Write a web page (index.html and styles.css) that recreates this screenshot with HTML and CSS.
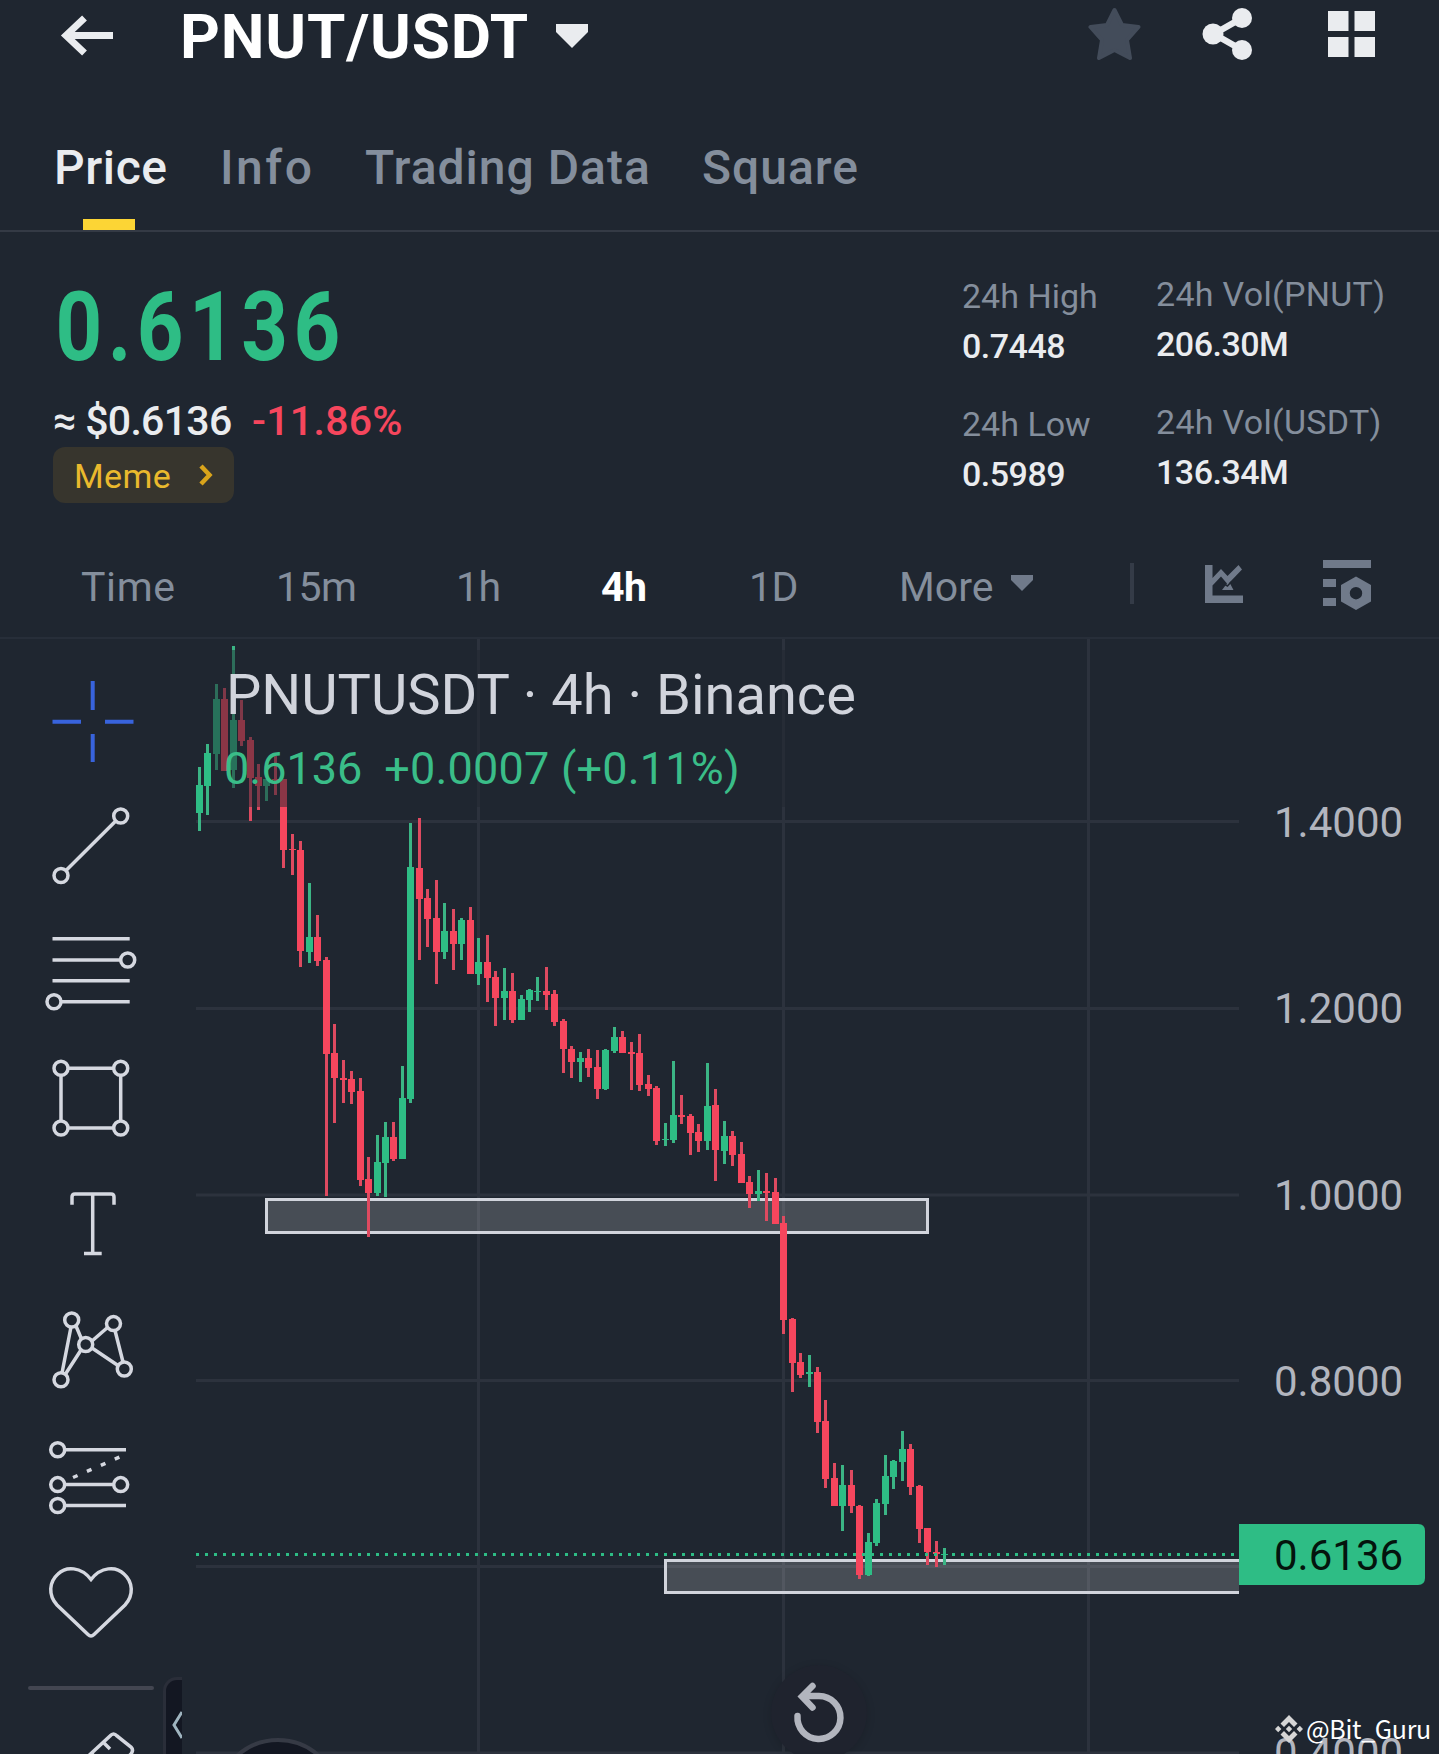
FILE: index.html
```
<!DOCTYPE html>
<html lang="en">
<head>
  <meta charset="utf-8">
  <meta name="viewport" content="width=device-width">
  <title>PNUT/USDT</title>
  <link rel="stylesheet" href="styles.css">
</head>
<body>
<div class="app">

  <header class="header">
    <svg class="back" width="54" height="42" viewBox="0 0 54 42">
      <path d="M53 20.5H6M24.500 3L6 20.500L24.500 38" fill="none" stroke="#eaecef" stroke-width="7"/>
    </svg>
    <h1 class="pair">PNUT/USDT</h1>
    <svg class="caret" width="32" height="24" viewBox="0 0 32 24"><path d="M0 0H32V8L16 24L0 8Z" fill="#eaecef"/></svg>
    <div class="actions">
      <svg width="53" height="54" viewBox="0 0 53 54">
        <path d="M26.500 3L34 18L50.500 20L39 33L42 51L26.500 43L11 51L14 33L2.500 20L19 18Z" fill="#434c5a" stroke="#434c5a" stroke-width="4" stroke-linejoin="round"/>
      </svg>
      <svg width="52" height="54" viewBox="0 0 52 54">
        <path d="M40 11L12 27L40 43" fill="none" stroke="#eaecef" stroke-width="6.500"/>
        <circle cx="40" cy="11" r="10" fill="#eaecef"/>
        <circle cx="11" cy="27" r="10.500" fill="#eaecef"/>
        <circle cx="40" cy="43" r="10" fill="#eaecef"/>
      </svg>
      <svg width="48" height="48" viewBox="0 0 48 48">
        <path d="M0 1H20.500V21H0ZM26.500 1H47V21H26.500ZM0 27H20.500V47H0ZM26.500 27H47V47H26.500Z" fill="#eaecef"/>
      </svg>
    </div>
  </header>

  <nav class="tabs">
    <a class="tab active">Price</a>
    <a class="tab info">Info</a>
    <a class="tab">Trading Data</a>
    <a class="tab">Square</a>
  </nav>

  <section class="ticker">
    <div class="quote">
      <div class="last">0.6136</div>
      <div class="sub"><span class="usd">≈ $0.6136</span><span class="change">-11.86%</span></div>
      <div class="tag"><span>Meme</span>
        <svg width="14" height="22" viewBox="0 0 14 22"><path d="M2 2L10.500 11L2 20" fill="none" stroke="#d9a41b" stroke-width="4.500"/></svg>
      </div>
    </div>
    <div class="stats">
      <div class="stat-col">
        <div class="stat"><span class="label">24h High</span><span class="value">0.7448</span></div>
        <div class="stat"><span class="label">24h Low</span><span class="value">0.5989</span></div>
      </div>
      <div class="stat-col vol">
        <div class="stat"><span class="label">24h Vol(PNUT)</span><span class="value">206.30M</span></div>
        <div class="stat"><span class="label">24h Vol(USDT)</span><span class="value">136.34M</span></div>
      </div>
    </div>
  </section>

  <nav class="intervals">
    <span class="time">Time</span>
    <span>15m</span>
    <span>1h</span>
    <span class="on">4h</span>
    <span>1D</span>
    <span class="more">More <svg width="22" height="16" viewBox="0 0 22 16"><path d="M0 0H22V5L11 16L0 5Z" fill="#707a8a"/></svg></span>
    <i class="divider"></i>
    <svg class="ic-chart" width="39" height="40" viewBox="0 0 39 40">
      <path d="M0 1H7.500V14L16 5L22.500 12L33.500 1L37 5.500L24.500 18.500L28.500 26H17L22 19.500L16 12.500L7.500 21.500V31.500H38V39H0Z" fill="#707a8a"/>
      <path d="M17.500 19L22.500 22L26 18" fill="none" stroke="#1f2630" stroke-width="1.500"/>
    </svg>
    <svg class="ic-settings" width="48" height="50" viewBox="0 0 48 50">
      <path d="M0 0H48V8H0ZM0 19H13V27H0ZM0 38H13V46H0Z" fill="#707a8a"/>
      <path fill-rule="evenodd" d="M33 16.500L48 25V41.500L33 50L18 41.500V25ZM33 27A6.200 6.200 0 1 0 33 39.400A6.200 6.200 0 1 0 33 27Z" fill="#707a8a"/>
    </svg>
  </nav>

  <main class="chart">
    <aside class="tools">
      <svg class="cross" viewBox="0 0 182 126"><path d="M52.500 62.700H81M105 62.700H133.500M92.700 22V51M92.700 75V103"/></svg>
      <svg viewBox="0 0 182 126">
        <path d="M66 85.500L115.700 36"/>
        <circle cx="120.700" cy="31" r="7"/><circle cx="61" cy="90.500" r="7"/>
      </svg>
      <svg viewBox="0 0 182 126">
        <path d="M52.500 27.700H129.700M52.500 49H120.700M52.500 69.700H129.700M61 90.700H129.700"/>
        <circle cx="127.700" cy="49" r="7"/><circle cx="54" cy="90.700" r="7"/>
      </svg>
      <svg viewBox="0 0 182 126">
        <path d="M68 31.300H113.700M68 91H113.700M61 38.300V84M120.700 38.300V84"/>
        <circle cx="61" cy="31.300" r="7"/><circle cx="120.700" cy="31.300" r="7"/>
        <circle cx="61" cy="91" r="7"/><circle cx="120.700" cy="91" r="7"/>
      </svg>
      <svg viewBox="0 0 182 126"><path d="M72 41.700V34Q72 31 75 31H111Q114 31 114 34V41.700M92.700 31V90.600M84 90.600H101.700"/></svg>
      <svg viewBox="0 0 182 126">
        <path d="M71 38L62 84M76 37L81.500 50M81 61L65.500 85M92 52L107.500 38.500M92 59L118 76.500M115 41.500L123 73"/>
        <circle cx="71.700" cy="31" r="7"/><circle cx="113.500" cy="34.600" r="7"/><circle cx="85.700" cy="55.500" r="7"/>
        <circle cx="61" cy="90.700" r="7"/><circle cx="124.300" cy="80" r="7"/>
      </svg>
      <svg viewBox="0 0 182 126">
        <path d="M64.700 34.800H126M64.700 69.600H113.700M64.700 90.500H126"/>
        <path d="M73 62.500L121 41.500" stroke-dasharray="5 10.200"/>
        <circle cx="57.700" cy="34.800" r="7"/><circle cx="57.700" cy="69.600" r="7"/>
        <circle cx="120.700" cy="69.600" r="7"/><circle cx="57.700" cy="90.500" r="7"/>
      </svg>
      <svg viewBox="0 0 182 126"><path d="M91 38.500C81 25.500 66 25 58 33C49 41 48 54 57 64L88 93.500Q91 96.500 94 93.500L125 64C134 54 133 41 124 33C116 25 101 25.500 91 38.500Z"/></svg>
      <hr class="sep">
      <svg class="ruler" viewBox="0 0 182 64"><path d="M70 65L110 28Q113.500 24 117 28L131 39Q134 42 131 46L110 66M103 34L110 41M91 45L100 54"/></svg>
    </aside>
    <div class="collapse">
      <svg width="12" height="30" viewBox="0 0 12 30"><path d="M11 2L3 15L11 28" fill="none" stroke="#9fb4bf" stroke-width="3"/></svg>
    </div>

    <div class="plot">
      <svg class="canvas" width="1257" height="1115" viewBox="182 639 1257 1115">
        <g stroke="#2c323d" stroke-width="3">
          <path d="M478.500 637V1754M783.500 637V1754M1088.500 637V1754"/>
          <path d="M196 821.500H1239M196 1008.500H1239M196 1195H1239M196 1380.500H1239M196 1566.500H1239M196 1753H1239"/>
        </g>
        <g fill="#fff" fill-opacity=".18" stroke="#d1d4dc" stroke-width="3">
          <rect x="266.500" y="1199.500" width="661" height="33"/>
          <path d="M1239 1560.500H665.500V1592.500H1239"/>
        </g>
        <g id="candles"></g>
        <path d="M196 1554.500H1239" stroke="#2ebd85" stroke-width="3" stroke-dasharray="3 6"/>
        <rect x="212" y="650" width="650" height="157" fill="#1f2630" fill-opacity=".5"/>
        <g class="axis">
          <text x="1274" y="836.500">1.4000</text>
          <text x="1274" y="1023">1.2000</text>
          <text x="1274" y="1209.500">1.0000</text>
          <text x="1274" y="1396">0.8000</text>
          <text x="1274" y="1768">0.4000</text>
        </g>
        <path d="M1239 1524H1418Q1425 1524 1425 1531V1578Q1425 1585 1418 1585H1239Z" fill="#2ebd85"/>
        <text class="now" x="1274" y="1570">0.6136</text>
        <circle cx="278" cy="1801" r="61" fill="#131722" stroke="#363a45" stroke-width="4"/>
      </svg>

      <div class="legend">
        <div class="symbol">PNUTUSDT · 4h · Binance</div>
        <div class="ohlc"><span>0.6136</span><span class="delta">+0.0007 (+0.11%)</span></div>
      </div>

      <div class="reset">
        <svg width="56" height="64" viewBox="0 0 56 64">
          <path d="M6.500 36A21.500 21.500 0 1 0 28 16H14M21.500 6L11 16.500L21.500 27.500" fill="none" stroke="#b2b5be" stroke-width="6.500" stroke-linecap="round"/>
        </svg>
      </div>

      <div class="watermark">
        <svg width="28" height="28" viewBox="0 0 28 28" fill="#d6d6d6">
          <path d="M14 0L22.500 8.500L19 12L14 7L9 12L5.500 8.500ZM14 28L22.500 19.500L19 16L14 21L9 16L5.500 19.500ZM3.200 10.800L6.400 14L3.200 17.200L0 14ZM24.800 10.800L28 14L24.800 17.200L21.600 14ZM14 10.800L17.200 14L14 17.200L10.800 14Z"/>
        </svg>
        <span>@Bit_Guru</span>
      </div>
    </div>
  </main>
</div>
<script src="chart.js"></script>
</body>
</html>
```

FILE: styles.css
```
* {
  box-sizing: border-box;
}

body {
  margin: 0;
  background: #1f2630;
  color: #eaecef;
  font-family: Roboto, "Liberation Sans", sans-serif;
}

svg {
  display: block;
  flex: none;
}

.app {
  width: 1439px;
  height: 1754px;
  overflow: hidden;
}

/* header */
.header {
  display: flex;
  align-items: center;
  height: 74px;
  padding: 0 63px 0 60px;
}

.back {
  margin-top: -3px;
}

.pair {
  margin: 0 0 0 66px;
  width: 376px;
  font-size: 62px;
  line-height: 74px;
  font-weight: 700;
  letter-spacing: .8px;
  color: #fff;
  white-space: nowrap;
}

.caret {
  margin-top: -3px;
}

.actions {
  display: flex;
  align-items: center;
  margin: -6px 0 0 auto;
}

.actions svg + svg {
  margin-left: 61px;
}

.actions svg:last-child {
  margin-left: 74px;
}

/* tabs */
.tabs {
  display: grid;
  grid-template-columns: 166px 145px 337px auto;
  height: 158px;
  padding: 64px 0 0 54px;
  border-bottom: 2px solid #343a45;
}

.tab {
  position: relative;
  font-size: 48px;
  line-height: 60px;
  font-weight: 500;
  letter-spacing: 1px;
  color: #848e9c;
  white-space: nowrap;
}

.tab.info {
  letter-spacing: 2.5px;
}

.tab.active {
  color: #eaecef;
  letter-spacing: .6px;
}

.tab.active::after {
  content: "";
  position: absolute;
  left: 29px;
  bottom: 0;
  width: 52px;
  height: 11px;
  background: #fcd535;
}

/* last price and 24h stats */
.ticker {
  display: flex;
  justify-content: space-between;
  height: 305px;
  padding: 35px 0 0 53px;
}

.last {
  height: 120px;
  padding-left: 3px;
  font-size: 97px;
  line-height: 120px;
  font-weight: 700;
  color: #2ebd85;
  letter-spacing: 6.5px;
  transform: scaleX(.84);
  transform-origin: left;
}

.sub {
  display: flex;
  height: 60px;
  margin-top: 4px;
  font-size: 41px;
  line-height: 60px;
  font-weight: 500;
  white-space: nowrap;
}

.usd {
  width: 199px;
  letter-spacing: -.7px;
}

.change {
  color: #f6465d;
  letter-spacing: .3px;
}

.tag {
  display: flex;
  align-items: center;
  justify-content: space-between;
  width: 181px;
  height: 56px;
  margin-top: -4px;
  padding: 0 21px 0 21px;
  border-radius: 12px;
  background: #37352d;
  color: #eab92d;
  font-size: 34px;
  letter-spacing: .4px;
}

.tag span {
  padding-top: 2px;
}

.stats {
  display: flex;
  font-size: 34px;
}

.stat-col {
  width: 194px;
  padding-top: 4px;
}

.stat-col.vol {
  width: 283px;
  padding-top: 2px;
}

.stat {
  height: 128px;
  white-space: nowrap;
}

.stat span {
  display: block;
  line-height: 50px;
}

.label {
  color: #848e9c;
}

.vol .label {
  letter-spacing: .3px;
}

.stat .value {
  font-weight: 500;
  letter-spacing: -.5px;
}

/* intervals */
.intervals {
  display: grid;
  grid-template-columns: 195px 180px 145px 148px 150px 231px 75px 118px 48px;
  align-items: start;
  height: 100px;
  padding: 23px 0 0 81px;
  font-size: 41px;
  line-height: 54px;
  letter-spacing: -.5px;
  color: #848e9c;
}

.intervals .time {
  letter-spacing: .6px;
}

.intervals .on {
  color: #fff;
  font-weight: 700;
}

.more {
  display: flex;
  align-items: center;
  height: 54px;
  letter-spacing: 0;
}

.more svg {
  margin: -8px 0 0 18px;
}

.divider {
  width: 4px;
  height: 41px;
  margin-top: 3px;
  background: #343b47;
}

.ic-chart {
  margin-top: 4px;
}

/* chart */
.chart {
  position: relative;
  display: flex;
  height: 1117px;
  border-top: 2px solid #272e39;
}

.tools {
  width: 182px;
  padding-top: 20px;
}

.tools svg {
  width: 182px;
  height: 126px;
  fill: none;
  stroke: #d5d8e0;
  stroke-width: 3.5;
}

.tools .cross {
  stroke: #3863dc;
  stroke-width: 4;
}

.tools .ruler {
  height: 64px;
}

.sep {
  width: 126px;
  height: 4px;
  margin: 19px 28px 18px;
  border: 0;
  border-radius: 2px;
  background: #434651;
}

.collapse {
  position: absolute;
  left: 163px;
  top: 1038px;
  width: 19px;
  height: 90px;
  padding: 30px 0 0 5px;
  border: 3px solid #2a2e39;
  border-right: 0;
  border-radius: 14px 0 0 0;
  background: #131722;
  overflow: hidden;
}

.plot {
  position: relative;
  width: 1257px;
}

.axis text,
.now {
  font-size: 42px;
  fill: #b2b5be;
}

.now {
  fill: #04140d;
}

.legend {
  position: absolute;
  left: 44px;
  top: 20px;
  white-space: nowrap;
}

.symbol {
  height: 72px;
  font-size: 56px;
  line-height: 72px;
  color: #d1d4dc;
}

.ohlc {
  display: flex;
  height: 60px;
  margin: 8px 0 0 -2px;
  font-size: 45px;
  line-height: 60px;
  color: #3abd88;
}

.ohlc .delta {
  margin-left: 22px;
  letter-spacing: .2px;
}

.reset {
  position: absolute;
  left: 589px;
  top: 1026px;
  width: 96px;
  height: 96px;
  padding: 15px 0 0 20px;
  border-radius: 50%;
  background: #1f232e;
  box-shadow: 0 2px 8px rgba(0, 0, 0, .15);
}

.watermark {
  position: absolute;
  left: 1093px;
  top: 1070px;
  display: flex;
  align-items: center;
  height: 40px;
  font-family: "Noto Sans CJK SC", "Noto Sans", sans-serif;
  font-size: 25px;
  line-height: 36px;
  letter-spacing: -.3px;
  color: #fff;
}

.watermark span {
  margin: -2px 0 0 3px;
}
```

FILE: chart.js
```
// [up, high, low, body top, body bottom]
var candles = [
  [1,767,831,785,813],[1,744,815,753,786],[1,684,770,699,754],[0,688,771,699,771],
  [1,646,788,720,770],[0,700,746,720,741],[0,737,821,740,778],[0,764,810,777,786],
  [1,779,801,779,786],[0,756,795,779,780],[0,779,868,779,850],[0,834,875,849,850],
  [0,841,967,850,951],[1,883,963,937,952],[0,915,966,937,961],[0,957,1196,960,1054],
  [0,1024,1123,1053,1078],[0,1060,1103,1078,1080],[0,1071,1104,1079,1092],[0,1078,1186,1091,1180],
  [0,1157,1237,1179,1193],[1,1135,1196,1162,1193],[1,1122,1197,1137,1163],[0,1122,1161,1137,1159],
  [1,1066,1159,1098,1159],[1,823,1103,867,1099],[0,818,960,868,899],[0,889,947,898,919],
  [0,880,984,918,952],[1,903,959,931,952],[0,909,970,931,944],[1,918,960,920,944],
  [0,907,974,920,974],[1,938,985,962,974],[0,935,1002,962,978],[0,971,1026,977,998],
  [1,968,1020,991,998],[0,973,1023,991,1020],[1,995,1020,999,1020],[1,989,1012,990,1000],
  [1,977,1001,991,992],[0,967,1010,991,995],[0,990,1026,994,1022],[0,1019,1073,1021,1049],
  [0,1046,1078,1049,1062],[1,1052,1082,1058,1062],[0,1049,1077,1058,1068],[0,1050,1099,1067,1089],
  [1,1049,1090,1050,1089],[1,1027,1053,1037,1051],[0,1031,1053,1037,1053],[0,1042,1090,1052,1054],
  [0,1034,1091,1053,1085],[0,1075,1096,1084,1089],[0,1086,1145,1088,1141],[1,1123,1146,1139,1140],
  [1,1061,1143,1115,1140],[0,1095,1124,1115,1117],[0,1114,1155,1116,1133],[0,1124,1152,1132,1141],
  [1,1063,1150,1106,1141],[0,1089,1181,1105,1150],[1,1121,1164,1136,1151],[0,1131,1166,1136,1155],
  [0,1142,1183,1154,1183],[0,1176,1208,1182,1194],[1,1170,1201,1191,1194],[0,1173,1221,1191,1193],
  [0,1178,1224,1192,1224],[0,1216,1334,1223,1320],[0,1318,1392,1319,1363],[0,1353,1378,1362,1375],
  [1,1355,1387,1372,1374],[0,1367,1433,1372,1422],[0,1400,1488,1421,1479],[0,1463,1506,1478,1506],
  [1,1465,1531,1485,1506],[0,1470,1513,1485,1506],[0,1505,1579,1506,1575],[1,1533,1576,1542,1575],
  [1,1499,1546,1503,1543],[1,1455,1515,1476,1504],[1,1460,1489,1461,1477],[1,1431,1481,1449,1462],
  [0,1444,1495,1449,1487],[0,1485,1543,1486,1529],[0,1528,1565,1528,1552],[0,1541,1567,1552,1554],
  [1,1548,1565,1554,1555]
];

var START = 199.18;
var STEP = 8.47;
var group = document.getElementById("candles");

function bar(x, y, w, h, color) {
  var r = document.createElementNS("http://www.w3.org/2000/svg", "rect");
  r.setAttribute("x", x);
  r.setAttribute("y", y);
  r.setAttribute("width", w);
  r.setAttribute("height", h);
  r.setAttribute("fill", color);
  group.appendChild(r);
}

candles.forEach(function (c, i) {
  var x = Math.floor(START + i * STEP);
  bar(x - 1, c[1], 3, c[2] - c[1], c[0] ? "#3bb585" : "#de4a60");
  bar(x - 3, c[3], 7, c[4] - c[3], c[0] ? "#2ebd85" : "#f6465d");
});
```
